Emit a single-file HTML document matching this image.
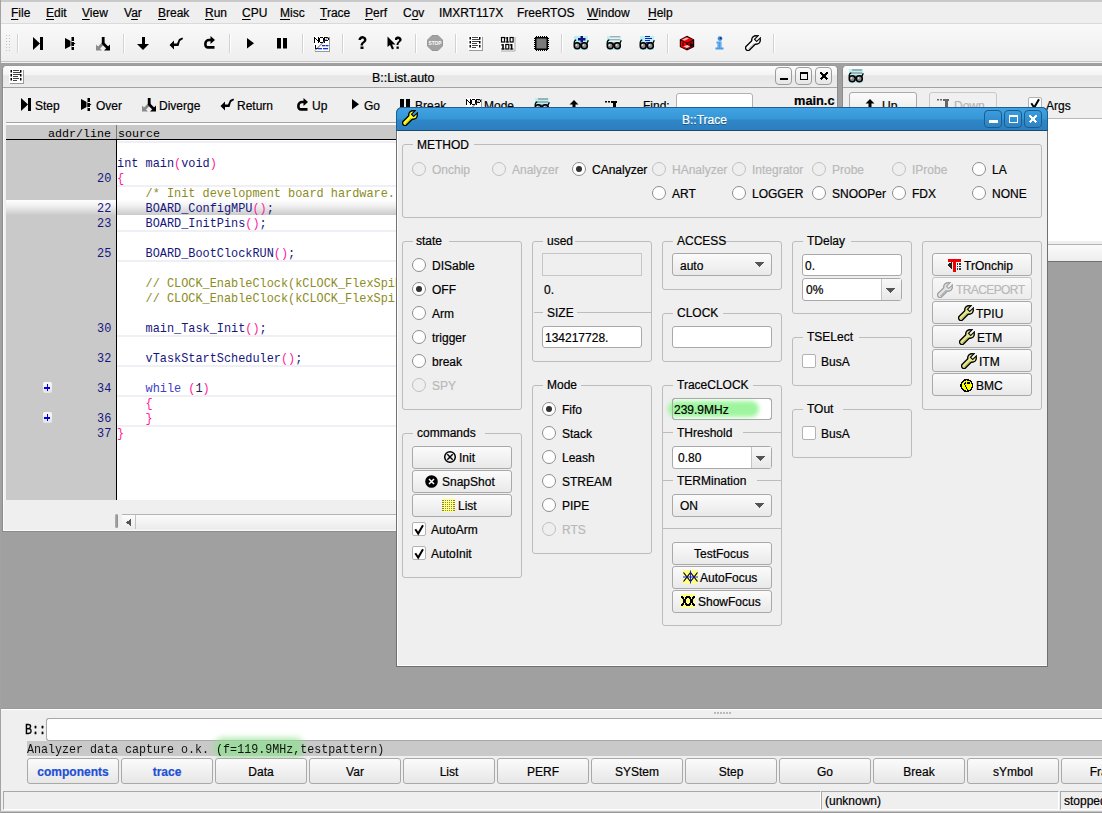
<!DOCTYPE html><html><head><meta charset="utf-8"><style>
html,body{margin:0;padding:0;}
body{width:1102px;height:813px;position:relative;overflow:hidden;background:#efefef;font-family:"Liberation Sans",sans-serif;font-size:12px;}
.a{position:absolute;}
.t{position:absolute;white-space:pre;line-height:14px;font-size:12px;color:#000;}
.s{font-family:"Liberation Sans",sans-serif;-webkit-text-stroke:0.2px currentColor;}
.m{font-family:"Liberation Mono",monospace;font-size:11.68px;}
.grp{position:absolute;border:1px solid #bcbcbc;border-radius:3px;box-sizing:border-box;}
.rad{position:absolute;width:14px;height:14px;border-radius:50%;box-sizing:border-box;border:1px solid #8e8e8e;background:#fff;}
.rad.dis{border-color:#c0c0c0;background:#efefef;}
.rad.on::after{content:"";position:absolute;left:3px;top:3px;width:6px;height:6px;border-radius:50%;background:#303030;}
.chk{position:absolute;width:14px;height:14px;box-sizing:border-box;border:1px solid #b2b2b2;border-radius:2px;background:#fff;}
.btn{position:absolute;box-sizing:border-box;border:1px solid #a9a9a9;border-radius:3px;background:linear-gradient(#fbfbfb,#e9e9e9);}
.inp{position:absolute;box-sizing:border-box;border:1px solid #a9a9a9;border-radius:3px;background:#fff;}
.sep{position:absolute;width:1px;background:#cfcfcf;}
</style></head><body>
<div class="a" style="left:0px;top:0px;width:1102px;height:2px;background:#c9c9c9"></div>
<div class="a" style="left:0px;top:0px;width:1px;height:813px;background:#a3a3a3"></div>
<div class="a" style="left:1px;top:23px;width:1101px;height:1px;background:#dadada"></div>
<div class="t s" style="left:11px;top:6px;text-decoration-thickness:1px;text-underline-offset:2px;"><u>F</u>ile</div>
<div class="t s" style="left:46px;top:6px;text-decoration-thickness:1px;text-underline-offset:2px;"><u>E</u>dit</div>
<div class="t s" style="left:82px;top:6px;text-decoration-thickness:1px;text-underline-offset:2px;"><u>V</u>iew</div>
<div class="t s" style="left:124px;top:6px;text-decoration-thickness:1px;text-underline-offset:2px;">V<u>a</u>r</div>
<div class="t s" style="left:158px;top:6px;text-decoration-thickness:1px;text-underline-offset:2px;"><u>B</u>reak</div>
<div class="t s" style="left:205px;top:6px;text-decoration-thickness:1px;text-underline-offset:2px;"><u>R</u>un</div>
<div class="t s" style="left:242px;top:6px;text-decoration-thickness:1px;text-underline-offset:2px;"><u>C</u>PU</div>
<div class="t s" style="left:280px;top:6px;text-decoration-thickness:1px;text-underline-offset:2px;"><u>M</u>isc</div>
<div class="t s" style="left:320px;top:6px;text-decoration-thickness:1px;text-underline-offset:2px;"><u>T</u>race</div>
<div class="t s" style="left:365px;top:6px;text-decoration-thickness:1px;text-underline-offset:2px;"><u>P</u>erf</div>
<div class="t s" style="left:403px;top:6px;text-decoration-thickness:1px;text-underline-offset:2px;">C<u>o</u>v</div>
<div class="t s" style="left:439px;top:6px;text-decoration-thickness:1px;text-underline-offset:2px;">IMXRT117X</div>
<div class="t s" style="left:517px;top:6px;text-decoration-thickness:1px;text-underline-offset:2px;">FreeRTOS</div>
<div class="t s" style="left:587px;top:6px;text-decoration-thickness:1px;text-underline-offset:2px;"><u>W</u>indow</div>
<div class="t s" style="left:648px;top:6px;text-decoration-thickness:1px;text-underline-offset:2px;"><u>H</u>elp</div>
<div class="a" style="left:1px;top:24px;width:1101px;height:37px;background:linear-gradient(#f9f9f9,#eeeeee)"></div>
<div class="a" style="left:1px;top:61px;width:1101px;height:1px;background:#c4c4c4"></div>
<div class="a" style="left:1px;top:62px;width:1101px;height:1px;background:#f2f2f2"></div>
<div class="a" style="left:6px;top:35px;width:1px;height:1px;background:#c0c0c0"></div>
<div class="a" style="left:9px;top:35px;width:1px;height:1px;background:#c0c0c0"></div>
<div class="a" style="left:6px;top:38px;width:1px;height:1px;background:#c0c0c0"></div>
<div class="a" style="left:9px;top:38px;width:1px;height:1px;background:#c0c0c0"></div>
<div class="a" style="left:6px;top:41px;width:1px;height:1px;background:#c0c0c0"></div>
<div class="a" style="left:9px;top:41px;width:1px;height:1px;background:#c0c0c0"></div>
<div class="a" style="left:6px;top:44px;width:1px;height:1px;background:#c0c0c0"></div>
<div class="a" style="left:9px;top:44px;width:1px;height:1px;background:#c0c0c0"></div>
<div class="a" style="left:6px;top:47px;width:1px;height:1px;background:#c0c0c0"></div>
<div class="a" style="left:9px;top:47px;width:1px;height:1px;background:#c0c0c0"></div>
<div class="a" style="left:6px;top:50px;width:1px;height:1px;background:#c0c0c0"></div>
<div class="a" style="left:9px;top:50px;width:1px;height:1px;background:#c0c0c0"></div>
<div class="a" style="left:17px;top:34px;width:1px;height:19px;background:#d2d2d2"></div>
<div class="a" style="left:18px;top:34px;width:1px;height:19px;background:#ffffff"></div>
<div class="a" style="left:123px;top:34px;width:1px;height:19px;background:#d2d2d2"></div>
<div class="a" style="left:124px;top:34px;width:1px;height:19px;background:#ffffff"></div>
<div class="a" style="left:229px;top:34px;width:1px;height:19px;background:#d2d2d2"></div>
<div class="a" style="left:230px;top:34px;width:1px;height:19px;background:#ffffff"></div>
<div class="a" style="left:302px;top:34px;width:1px;height:19px;background:#d2d2d2"></div>
<div class="a" style="left:303px;top:34px;width:1px;height:19px;background:#ffffff"></div>
<div class="a" style="left:342px;top:34px;width:1px;height:19px;background:#d2d2d2"></div>
<div class="a" style="left:343px;top:34px;width:1px;height:19px;background:#ffffff"></div>
<div class="a" style="left:415px;top:34px;width:1px;height:19px;background:#d2d2d2"></div>
<div class="a" style="left:416px;top:34px;width:1px;height:19px;background:#ffffff"></div>
<div class="a" style="left:455px;top:34px;width:1px;height:19px;background:#d2d2d2"></div>
<div class="a" style="left:456px;top:34px;width:1px;height:19px;background:#ffffff"></div>
<div class="a" style="left:561px;top:34px;width:1px;height:19px;background:#d2d2d2"></div>
<div class="a" style="left:562px;top:34px;width:1px;height:19px;background:#ffffff"></div>
<div class="a" style="left:667px;top:34px;width:1px;height:19px;background:#d2d2d2"></div>
<div class="a" style="left:668px;top:34px;width:1px;height:19px;background:#ffffff"></div>
<div class="a" style="left:773px;top:34px;width:1px;height:19px;background:#d2d2d2"></div>
<div class="a" style="left:774px;top:34px;width:1px;height:19px;background:#ffffff"></div>
<svg class="a" style="left:33px;top:37px;overflow:visible" width="16" height="16" viewBox="0 0 16 16"><path d="M0 0 L7 6.5 L0 13 Z" fill="#000"/><rect x="7" y="0" width="3" height="13" fill="#000"/></svg>
<svg class="a" style="left:65px;top:37px;overflow:visible" width="16" height="16" viewBox="0 0 16 16"><path d="M0 1 L10.5 6.5 L0 12 Z" fill="#000"/><rect x="5.5" y="0" width="1" height="13" fill="#f4f4f4"/><rect x="6.5" y="0" width="2.5" height="13" fill="#000"/><rect x="6.5" y="4" width="2.5" height="1" fill="#f4f4f4"/><rect x="6.5" y="9" width="2.5" height="1" fill="#f4f4f4"/></svg>
<svg class="a" style="left:95px;top:37px;overflow:visible" width="16" height="16" viewBox="0 0 16 16"><path d="M8 6.5 L3 11.5" stroke="#8a8a8a" stroke-width="2.8"/><path d="M1 13.5 V7.5 L7 13.5 Z" fill="#8a8a8a"/><rect x="6.8" y="0" width="2.8" height="7" fill="#000"/><path d="M8.2 6.5 L13 11.3" stroke="#000" stroke-width="2.8"/><path d="M15 13.5 V7.5 L9 13.5 Z" fill="#000"/></svg>
<svg class="a" style="left:137px;top:37px;overflow:visible" width="16" height="16" viewBox="0 0 16 16"><rect x="5" y="0" width="3" height="7" fill="#000"/><path d="M0 7 H12 L6 13 Z" fill="#000"/></svg>
<svg class="a" style="left:169px;top:37px;overflow:visible" width="16" height="16" viewBox="0 0 16 16"><path d="M0.5 8 L5 3.5 L5 6.5 L8 6.5 L10 2 L13.5 0.5 L14 2 L11 4 L9.5 9 L5 9 L5 12.5 Z" fill="#000"/></svg>
<svg class="a" style="left:203px;top:36px;overflow:visible" width="16" height="16" viewBox="0 0 16 16"><path d="M8.5 4 H6 A3.6 3.6 0 0 0 2.4 7.6 V8.6 A2.6 2.6 0 0 0 5 11.4 H11.5" stroke="#000" stroke-width="2.6" fill="none"/><path d="M7.5 0 L12 4 L7.5 8 Z" fill="#000"/></svg>
<svg class="a" style="left:247px;top:38px;overflow:visible" width="16" height="16" viewBox="0 0 16 16"><path d="M0 0 L7 5.25 L0 10.5 Z" fill="#000"/></svg>
<svg class="a" style="left:277px;top:38px;overflow:visible" width="16" height="16" viewBox="0 0 16 16"><rect x="0" y="0" width="4" height="10.5" fill="#000"/><rect x="6" y="0" width="4" height="10.5" fill="#000"/></svg>
<svg class="a" style="left:314px;top:36px;overflow:visible" width="16" height="16" viewBox="0 0 16 16"><rect x="0" y="0" width="15" height="15" fill="#fff"/><rect x="15" y="1" width="1" height="15" fill="#999"/><rect x="1" y="15" width="15" height="1" fill="#999"/><rect x="0" y="1" width="1" height="1" fill="#000"/><rect x="4" y="1" width="1" height="1" fill="#000"/><rect x="0" y="2" width="2" height="1" fill="#000"/><rect x="4" y="2" width="1" height="1" fill="#000"/><rect x="0" y="3" width="1" height="1" fill="#000"/><rect x="2" y="3" width="1" height="1" fill="#000"/><rect x="4" y="3" width="1" height="1" fill="#000"/><rect x="0" y="4" width="1" height="1" fill="#000"/><rect x="3" y="4" width="2" height="1" fill="#000"/><rect x="0" y="5" width="1" height="1" fill="#000"/><rect x="4" y="5" width="1" height="1" fill="#000"/><rect x="0" y="6" width="1" height="1" fill="#000"/><rect x="4" y="6" width="1" height="1" fill="#000"/><rect x="6" y="1" width="3" height="1" fill="#000"/><rect x="5" y="2" width="1" height="1" fill="#000"/><rect x="9" y="2" width="1" height="1" fill="#000"/><rect x="5" y="3" width="1" height="1" fill="#000"/><rect x="9" y="3" width="1" height="1" fill="#000"/><rect x="5" y="4" width="1" height="1" fill="#000"/><rect x="9" y="4" width="1" height="1" fill="#000"/><rect x="5" y="5" width="1" height="1" fill="#000"/><rect x="9" y="5" width="1" height="1" fill="#000"/><rect x="6" y="6" width="3" height="1" fill="#000"/><rect x="10" y="1" width="4" height="1" fill="#000"/><rect x="10" y="2" width="1" height="1" fill="#000"/><rect x="14" y="2" width="1" height="1" fill="#000"/><rect x="10" y="3" width="1" height="1" fill="#000"/><rect x="14" y="3" width="1" height="1" fill="#000"/><rect x="10" y="4" width="4" height="1" fill="#000"/><rect x="10" y="5" width="1" height="1" fill="#000"/><rect x="10" y="6" width="1" height="1" fill="#000"/><rect x="0" y="0" width="0" height="0"/><rect x="1" y="9" width="1" height="1" fill="#000"/><rect x="1" y="10" width="1" height="1" fill="#000"/><rect x="1" y="11" width="1" height="1" fill="#000"/><rect x="1" y="12" width="3" height="1" fill="#000"/><path d="M1 14.5 L14.5 1" stroke="#444" stroke-width="0.9"/><rect x="8" y="9" width="3" height="1.3" fill="#1030e0"/><rect x="11.5" y="9" width="3" height="1.3" fill="#1030e0"/><rect x="4" y="12" width="4" height="1.3" fill="#1030e0"/><rect x="9" y="12" width="5" height="1.3" fill="#1030e0"/></svg>
<svg class="a" style="left:357px;top:36px;overflow:visible" width="16" height="16" viewBox="0 0 16 16"><path d="M1.5 4 A4 3.6 0 1 1 8 6.5 C6.5 7.5 6 8 6 9.5 L3.5 9.5 C3.5 7.5 4.5 6.5 6 5.5 A1.5 1.5 0 1 0 4 4 Z" fill="#000"/><rect x="3.5" y="10.5" width="3" height="2.5" fill="#000"/></svg>
<svg class="a" style="left:387px;top:36px;overflow:visible" width="16" height="16" viewBox="0 0 16 16"><path d="M0.5 0.5 L0.5 11 L3 9 L5 13.5 L7 12.5 L5 8.5 L8.5 8.5 Z" fill="#000"/><path d="M8 4 A3.3 3 0 1 1 13 6 C12 7 11.5 7.5 11.5 9 L9.5 9 C9.5 7 10.5 6.2 11.5 5.2 A1.1 1.1 0 1 0 10 4 Z" fill="#000"/><rect x="9.5" y="10.5" width="2.3" height="2.3" fill="#000"/></svg>
<svg class="a" style="left:427px;top:35px;overflow:visible" width="16" height="16" viewBox="0 0 16 16"><path d="M5 0.5 H11 L15.5 5 V11 L11 15.5 H5 L0.5 11 V5 Z" fill="#a2a2a2" stroke="#8a8a8a" stroke-width="0.8"/><text x="1.6" y="10.3" font-family="Liberation Sans" font-weight="bold" font-size="5.6" fill="#fff" textLength="12.8" lengthAdjust="spacingAndGlyphs">STOP</text></svg>
<svg class="a" style="left:468px;top:36px;overflow:visible" width="16" height="16" viewBox="0 0 16 16"><rect x="0" y="0" width="14" height="14" fill="#fff"/><rect x="14" y="1" width="1" height="14" fill="#9a9a9a"/><rect x="1" y="14" width="14" height="1" fill="#9a9a9a"/><rect x="1.5" y="1" width="1.5" height="2.5" fill="#000"/><rect x="11" y="1" width="1.5" height="2.5" fill="#000"/><rect x="1.5" y="5" width="1.5" height="2.5" fill="#000"/><rect x="11" y="5" width="1.5" height="2.5" fill="#000"/><rect x="1.5" y="9" width="1.5" height="2.5" fill="#000"/><rect x="11" y="9" width="1.5" height="2.5" fill="#000"/><rect x="4" y="1" width="6" height="1" fill="#444"/><rect x="4" y="3" width="8" height="1" fill="#444"/><rect x="4" y="5" width="7" height="1" fill="#444"/><rect x="4" y="7" width="5" height="1" fill="#444"/><rect x="4" y="9" width="6" height="1" fill="#444"/><rect x="4" y="11" width="4" height="1" fill="#444"/></svg>
<svg class="a" style="left:500px;top:36px;overflow:visible" width="16" height="16" viewBox="0 0 16 16"><rect x="0.5" y="0.5" width="14" height="14" fill="#fff"/><path d="M15 1 V15 H1" stroke="#aaa" fill="none"/><rect x="1.5" y="1.5" width="3" height="4.5" fill="none" stroke="#000" stroke-width="1.2"/><rect x="6.5" y="1" width="1.6" height="5.5" fill="#000"/><rect x="5.5" y="5.5" width="3.6" height="1" fill="#000"/><rect x="5.5" y="1.3" width="1.2" height="1.2" fill="#000"/><rect x="10.1" y="1.5" width="3" height="4.5" fill="none" stroke="#000" stroke-width="1.2"/><rect x="2.2" y="8" width="1.6" height="5.5" fill="#000"/><rect x="1.2" y="12.5" width="3.6" height="1" fill="#000"/><rect x="1.2" y="8.3" width="1.2" height="1.2" fill="#000"/><rect x="5.8" y="8.5" width="3" height="4.5" fill="none" stroke="#000" stroke-width="1.2"/><rect x="10.799999999999999" y="8" width="1.6" height="5.5" fill="#000"/><rect x="9.799999999999999" y="12.5" width="3.6" height="1" fill="#000"/><rect x="9.799999999999999" y="8.3" width="1.2" height="1.2" fill="#000"/></svg>
<svg class="a" style="left:534px;top:36px;overflow:visible" width="16" height="16" viewBox="0 0 16 16"><rect x="1" y="1" width="13" height="13" fill="#000"/><rect x="2.5" y="2.5" width="10" height="10" fill="#7a7a7a"/><path d="M0.5 2 V13 M14.5 2 V13 M2 0.5 H13 M2 14.5 H13" stroke="#000" stroke-dasharray="1 1"/></svg>
<svg class="a" style="left:573px;top:35px;overflow:visible" width="16" height="16" viewBox="0 0 16 16"><rect x="1" y="1" width="14" height="14" fill="#b8f0f4"/><rect x="7.5" y="1" width="2.5" height="6.5" fill="#101080"/><rect x="5" y="3" width="7.5" height="2.5" fill="#101080"/><path d="M1.3 9.5 C0.8 6.5 1.8 5.2 3.2 5" stroke="#000" stroke-width="1.3" fill="none"/><path d="M13.8 8.5 L15.3 5.2" stroke="#000" stroke-width="1.3" fill="none"/><circle cx="4.2" cy="10.8" r="3" fill="#8c8c8c" stroke="#000" stroke-width="1.5"/><circle cx="11.3" cy="10.8" r="3" fill="#8c8c8c" stroke="#000" stroke-width="1.5"/><path d="M6.8 9.6 Q7.75 8.6 8.7 9.6" stroke="#000" stroke-width="1.3" fill="none"/><circle cx="3.4" cy="10" r="0.9" fill="#e0e0e0"/><circle cx="10.5" cy="10" r="0.9" fill="#e0e0e0"/></svg>
<svg class="a" style="left:606px;top:35px;overflow:visible" width="16" height="16" viewBox="0 0 16 16"><rect x="1" y="1" width="14" height="14" fill="#b8f0f4"/><rect x="4" y="1.5" width="10" height="1" fill="#777"/><rect x="4" y="2.5" width="10" height="1" fill="#fff"/><rect x="3" y="4.5" width="11" height="1" fill="#777"/><rect x="3" y="5.5" width="11" height="1" fill="#fff"/><rect x="4" y="7.5" width="10" height="1" fill="#777"/><path d="M1.3 9.5 C0.8 6.5 1.8 5.2 3.2 5" stroke="#000" stroke-width="1.3" fill="none"/><path d="M13.8 8.5 L15.3 5.2" stroke="#000" stroke-width="1.3" fill="none"/><circle cx="4.2" cy="10.8" r="3" fill="#8c8c8c" stroke="#000" stroke-width="1.5"/><circle cx="11.3" cy="10.8" r="3" fill="#8c8c8c" stroke="#000" stroke-width="1.5"/><path d="M6.8 9.6 Q7.75 8.6 8.7 9.6" stroke="#000" stroke-width="1.3" fill="none"/><circle cx="3.4" cy="10" r="0.9" fill="#e0e0e0"/><circle cx="10.5" cy="10" r="0.9" fill="#e0e0e0"/></svg>
<svg class="a" style="left:639px;top:35px;overflow:visible" width="16" height="16" viewBox="0 0 16 16"><rect x="1" y="1" width="14" height="14" fill="#b8f0f4"/><rect x="6" y="1" width="5" height="1" fill="#1020c0"/><rect x="6" y="3" width="7" height="1" fill="#1020c0"/><rect x="6" y="5" width="5" height="1" fill="#1020c0"/><rect x="7" y="7" width="6" height="1" fill="#1020c0"/><path d="M1.3 9.5 C0.8 6.5 1.8 5.2 3.2 5" stroke="#000" stroke-width="1.3" fill="none"/><path d="M13.8 8.5 L15.3 5.2" stroke="#000" stroke-width="1.3" fill="none"/><circle cx="4.2" cy="10.8" r="3" fill="#8c8c8c" stroke="#000" stroke-width="1.5"/><circle cx="11.3" cy="10.8" r="3" fill="#8c8c8c" stroke="#000" stroke-width="1.5"/><path d="M6.8 9.6 Q7.75 8.6 8.7 9.6" stroke="#000" stroke-width="1.3" fill="none"/><circle cx="3.4" cy="10" r="0.9" fill="#e0e0e0"/><circle cx="10.5" cy="10" r="0.9" fill="#e0e0e0"/></svg>
<svg class="a" style="left:679px;top:35px;overflow:visible" width="16" height="16" viewBox="0 0 16 16"><path d="M8 0.8 L15.2 4.5 L15.2 12 L8 15.6 L0.8 12 L0.8 4.5 Z" fill="#000"/><path d="M8 1.8 L14.2 4.8 L8 7.8 L1.8 4.8 Z" fill="#f00000"/><path d="M3 4.6 L7.5 2.4 L10 3.6 L5.5 5.8 Z" fill="#ffb0b0"/><path d="M1.8 5.6 L7.5 8.5 L7.5 14.6 L1.8 11.6 Z" fill="#ff0000"/><path d="M8.5 8.5 L14.2 5.6 L14.2 11.6 L8.5 14.6 Z" fill="#a00000"/><path d="M4 7.5 V11 M11.5 8 V11.5 L14 10" stroke="#000" stroke-width="1"/><path d="M4.5 11.5 L8 10 L11 11.5 L8 13 Z" fill="#ffc4c4"/></svg>
<svg class="a" style="left:715px;top:36px;overflow:visible" width="16" height="16" viewBox="0 0 16 16"><circle cx="5" cy="2.6" r="2.4" fill="#3d8fdc"/><circle cx="5.6" cy="2.2" r="1" fill="#103080"/><path d="M1.5 5.5 H6.5 V11.5 H8.5 V13.5 H0.5 V11.5 H2.5 V7.5 H1.5 Z" fill="#4a9ae6"/><path d="M3 7 H6 M3 9 H6 M3 11 H6" stroke="#9ccaf4" stroke-width="0.8" stroke-dasharray="1 1"/></svg>
<svg class="a" style="left:745px;top:35px" width="16" height="16" viewBox="0 0 16 16"><line x1="3" y1="13" x2="9" y2="7" stroke="#000" stroke-width="6.2" stroke-linecap="round"/><circle cx="11" cy="5" r="5" fill="#000"/><line x1="3" y1="13" x2="9" y2="7" stroke="#ffffff" stroke-width="3.6" stroke-linecap="round"/><circle cx="11" cy="5" r="3.6" fill="#ffffff"/><line x1="10.2" y1="5.8" x2="14.8" y2="1.2" stroke="#000" stroke-width="4.2"/><line x1="11" y1="5" x2="16" y2="0" stroke="#f2f2f2" stroke-width="2"/><line x1="3.5" y1="14" x2="9.5" y2="8" stroke="rgba(0,0,0,0.35)" stroke-width="1"/></svg>
<div class="a" style="left:1px;top:63px;width:1101px;height:646px;background:#a0a0a0"></div>
<div class="a" style="left:2px;top:65px;width:836px;height:467px;background:#efefef;border:1px solid #8c8c8c;border-top-color:#9a9a9a;border-radius:5px 5px 0 0;box-sizing:border-box"></div>
<div class="a" style="left:3px;top:66px;width:834px;height:21px;background:linear-gradient(#fdfdfd 0%,#f3f3f3 44%,#e6e6e6 46%,#ececec 100%);border-radius:4px 4px 0 0"></div>
<div class="a" style="left:3px;top:87px;width:834px;height:1px;background:#a3a3a3"></div>
<div class="t s" style="left:372px;top:71px;font-size:12.5px;">B::List.auto</div>
<div class="a" style="left:775px;top:67px;width:17px;height:18px;box-sizing:border-box;border:1px solid #9c9c9c;border-radius:4px;background:linear-gradient(#fbfbfb,#e6e6e6)"></div>
<div class="a" style="left:795px;top:67px;width:17px;height:18px;box-sizing:border-box;border:1px solid #9c9c9c;border-radius:4px;background:linear-gradient(#fbfbfb,#e6e6e6)"></div>
<div class="a" style="left:815px;top:67px;width:17px;height:18px;box-sizing:border-box;border:1px solid #9c9c9c;border-radius:4px;background:linear-gradient(#fbfbfb,#e6e6e6)"></div>
<div class="a" style="left:780px;top:78px;width:8px;height:2px;background:#000"></div>
<div class="a" style="left:800px;top:72px;width:8px;height:8px;border:1px solid #000;border-top-width:2px;box-sizing:border-box"></div>
<svg class="a" style="left:819px;top:71px" width="10" height="10" viewBox="0 0 10 10" shape-rendering="crispEdges"><path d="M1.5 1.5 L8.5 8.5 M8.5 1.5 L1.5 8.5" stroke="#000" stroke-width="2.2" fill="none"/></svg>
<div class="t s" style="left:35px;top:99px;">Step</div>
<div class="t s" style="left:96px;top:99px;">Over</div>
<div class="t s" style="left:159px;top:99px;">Diverge</div>
<div class="t s" style="left:237px;top:99px;">Return</div>
<div class="t s" style="left:312px;top:99px;">Up</div>
<div class="t s" style="left:364px;top:99px;">Go</div>
<div class="t s" style="left:415px;top:99px;">Break</div>
<div class="t s" style="left:484px;top:99px;">Mode</div>
<div class="t s" style="left:643px;top:99px;">Find:</div>
<div class="a" style="left:676px;top:93px;width:77px;height:20px;background:#fff;border:1px solid #b0b0b0;border-radius:3px;box-sizing:border-box"></div>
<div class="t s" style="left:794px;top:94px;font-weight:bold;font-size:12.8px;">main.c</div>
<svg class="a" style="left:21px;top:98px;overflow:visible" width="16" height="16" viewBox="0 0 16 16"><path d="M0 0 L7 6.5 L0 13 Z" fill="#000"/><rect x="7" y="0" width="3" height="13" fill="#000"/></svg>
<svg class="a" style="left:81px;top:98px;overflow:visible" width="16" height="16" viewBox="0 0 16 16"><path d="M0 1 L10.5 6.5 L0 12 Z" fill="#000"/><rect x="5.5" y="0" width="1" height="13" fill="#f4f4f4"/><rect x="6.5" y="0" width="2.5" height="13" fill="#000"/><rect x="6.5" y="4" width="2.5" height="1" fill="#f4f4f4"/><rect x="6.5" y="9" width="2.5" height="1" fill="#f4f4f4"/></svg>
<svg class="a" style="left:141px;top:98px;overflow:visible" width="16" height="16" viewBox="0 0 16 16"><path d="M8 6.5 L3 11.5" stroke="#8a8a8a" stroke-width="2.8"/><path d="M1 13.5 V7.5 L7 13.5 Z" fill="#8a8a8a"/><rect x="6.8" y="0" width="2.8" height="7" fill="#000"/><path d="M8.2 6.5 L13 11.3" stroke="#000" stroke-width="2.8"/><path d="M15 13.5 V7.5 L9 13.5 Z" fill="#000"/></svg>
<svg class="a" style="left:220px;top:98px;overflow:visible" width="16" height="16" viewBox="0 0 16 16"><path d="M0.5 8 L5 3.5 L5 6.5 L8 6.5 L10 2 L13.5 0.5 L14 2 L11 4 L9.5 9 L5 9 L5 12.5 Z" fill="#000"/></svg>
<svg class="a" style="left:296px;top:98px;overflow:visible" width="16" height="16" viewBox="0 0 16 16"><path d="M8.5 4 H6 A3.6 3.6 0 0 0 2.4 7.6 V8.6 A2.6 2.6 0 0 0 5 11.4 H11.5" stroke="#000" stroke-width="2.6" fill="none"/><path d="M7.5 0 L12 4 L7.5 8 Z" fill="#000"/></svg>
<svg class="a" style="left:352px;top:99px;overflow:visible" width="16" height="16" viewBox="0 0 16 16"><path d="M0 0 L7 5.25 L0 10.5 Z" fill="#000"/></svg>
<svg class="a" style="left:400px;top:99px;overflow:visible" width="16" height="16" viewBox="0 0 16 16"><rect x="0" y="0" width="4" height="10.5" fill="#000"/><rect x="6" y="0" width="4" height="10.5" fill="#000"/></svg>
<svg class="a" style="left:9px;top:69px;overflow:visible" width="16" height="16" viewBox="0 0 16 16"><rect x="0" y="0" width="14" height="14" fill="#fff"/><rect x="14" y="1" width="1" height="14" fill="#9a9a9a"/><rect x="1" y="14" width="14" height="1" fill="#9a9a9a"/><rect x="1.5" y="1" width="1.5" height="2.5" fill="#000"/><rect x="11" y="1" width="1.5" height="2.5" fill="#000"/><rect x="1.5" y="5" width="1.5" height="2.5" fill="#000"/><rect x="11" y="5" width="1.5" height="2.5" fill="#000"/><rect x="1.5" y="9" width="1.5" height="2.5" fill="#000"/><rect x="11" y="9" width="1.5" height="2.5" fill="#000"/><rect x="4" y="1" width="6" height="1" fill="#444"/><rect x="4" y="3" width="8" height="1" fill="#444"/><rect x="4" y="5" width="7" height="1" fill="#444"/><rect x="4" y="7" width="5" height="1" fill="#444"/><rect x="4" y="9" width="6" height="1" fill="#444"/><rect x="4" y="11" width="4" height="1" fill="#444"/></svg>
<svg class="a" style="left:466px;top:98px;overflow:visible" width="16" height="16" viewBox="0 0 16 16"><rect x="0" y="0" width="15" height="15" fill="#fff"/><rect x="15" y="1" width="1" height="15" fill="#999"/><rect x="1" y="15" width="15" height="1" fill="#999"/><rect x="0" y="1" width="1" height="1" fill="#000"/><rect x="4" y="1" width="1" height="1" fill="#000"/><rect x="0" y="2" width="2" height="1" fill="#000"/><rect x="4" y="2" width="1" height="1" fill="#000"/><rect x="0" y="3" width="1" height="1" fill="#000"/><rect x="2" y="3" width="1" height="1" fill="#000"/><rect x="4" y="3" width="1" height="1" fill="#000"/><rect x="0" y="4" width="1" height="1" fill="#000"/><rect x="3" y="4" width="2" height="1" fill="#000"/><rect x="0" y="5" width="1" height="1" fill="#000"/><rect x="4" y="5" width="1" height="1" fill="#000"/><rect x="0" y="6" width="1" height="1" fill="#000"/><rect x="4" y="6" width="1" height="1" fill="#000"/><rect x="6" y="1" width="3" height="1" fill="#000"/><rect x="5" y="2" width="1" height="1" fill="#000"/><rect x="9" y="2" width="1" height="1" fill="#000"/><rect x="5" y="3" width="1" height="1" fill="#000"/><rect x="9" y="3" width="1" height="1" fill="#000"/><rect x="5" y="4" width="1" height="1" fill="#000"/><rect x="9" y="4" width="1" height="1" fill="#000"/><rect x="5" y="5" width="1" height="1" fill="#000"/><rect x="9" y="5" width="1" height="1" fill="#000"/><rect x="6" y="6" width="3" height="1" fill="#000"/><rect x="10" y="1" width="4" height="1" fill="#000"/><rect x="10" y="2" width="1" height="1" fill="#000"/><rect x="14" y="2" width="1" height="1" fill="#000"/><rect x="10" y="3" width="1" height="1" fill="#000"/><rect x="14" y="3" width="1" height="1" fill="#000"/><rect x="10" y="4" width="4" height="1" fill="#000"/><rect x="10" y="5" width="1" height="1" fill="#000"/><rect x="10" y="6" width="1" height="1" fill="#000"/><rect x="0" y="0" width="0" height="0"/><rect x="1" y="9" width="1" height="1" fill="#000"/><rect x="1" y="10" width="1" height="1" fill="#000"/><rect x="1" y="11" width="1" height="1" fill="#000"/><rect x="1" y="12" width="3" height="1" fill="#000"/><path d="M1 14.5 L14.5 1" stroke="#444" stroke-width="0.9"/><rect x="8" y="9" width="3" height="1.3" fill="#1030e0"/><rect x="11.5" y="9" width="3" height="1.3" fill="#1030e0"/><rect x="4" y="12" width="4" height="1.3" fill="#1030e0"/><rect x="9" y="12" width="5" height="1.3" fill="#1030e0"/></svg>
<svg class="a" style="left:534px;top:97px;overflow:visible" width="16" height="16" viewBox="0 0 16 16"><rect x="1" y="1" width="14" height="14" fill="#b8f0f4"/><rect x="4" y="1.5" width="10" height="1" fill="#777"/><rect x="3" y="4.5" width="11" height="1" fill="#777"/><rect x="4" y="7.5" width="10" height="1" fill="#777"/><path d="M1.3 9.5 C0.8 6.5 1.8 5.2 3.2 5" stroke="#000" stroke-width="1.3" fill="none"/><path d="M13.8 8.5 L15.3 5.2" stroke="#000" stroke-width="1.3" fill="none"/><circle cx="4.2" cy="10.8" r="3" fill="#8c8c8c" stroke="#000" stroke-width="1.5"/><circle cx="11.3" cy="10.8" r="3" fill="#8c8c8c" stroke="#000" stroke-width="1.5"/><path d="M6.8 9.6 Q7.75 8.6 8.7 9.6" stroke="#000" stroke-width="1.3" fill="none"/><circle cx="3.4" cy="10" r="0.9" fill="#e0e0e0"/><circle cx="10.5" cy="10" r="0.9" fill="#e0e0e0"/></svg>
<svg class="a" style="left:570px;top:100px;overflow:visible" width="16" height="16" viewBox="0 0 16 16"><path d="M4 0 L8.5 4.5 H5.5 V12 H2.5 V4.5 H-0.5 Z" fill="#000"/></svg>
<svg class="a" style="left:605px;top:101px;overflow:visible" width="16" height="16" viewBox="0 0 16 16"><rect x="0" y="0" width="2" height="1.5" fill="#000"/><rect x="3" y="0" width="2" height="1.5" fill="#000"/><rect x="6" y="0" width="6" height="2" fill="#000"/><rect x="8" y="0" width="3" height="10" fill="#000"/></svg>
<div class="a" style="left:6px;top:122px;width:831px;height:1px;background:#a4a4a4"></div>
<div class="a" style="left:6px;top:123px;width:831px;height:2px;background:#fdfdfd"></div>
<div class="a" style="left:3px;top:88px;width:1px;height:442px;background:#fcfcfc"></div>
<div class="a" style="left:6px;top:125px;width:831px;height:14px;background:#c9c9c9"></div>
<div class="a" style="left:6px;top:139px;width:831px;height:1px;background:#000"></div>
<div class="a" style="left:116px;top:125px;width:1px;height:14px;background:#7a7a7a"></div>
<div class="t m" style="left:48px;top:127px;">addr/line</div>
<div class="t m" style="left:118px;top:127px;">source</div>
<div class="a" style="left:6px;top:140px;width:110px;height:360px;background:#c9c9c9"></div>
<div class="a" style="left:116px;top:140px;width:1px;height:360px;background:#000"></div>
<div class="a" style="left:117px;top:140px;width:720px;height:360px;background:#fff"></div>
<div class="a" style="left:117px;top:141px;width:720px;height:2px;background:#eef0f6"></div>
<div class="a" style="left:117px;top:185px;width:720px;height:2px;background:#eef0f6"></div>
<div class="a" style="left:117px;top:230px;width:720px;height:2px;background:#eef0f6"></div>
<div class="a" style="left:117px;top:260px;width:720px;height:2px;background:#eef0f6"></div>
<div class="a" style="left:117px;top:335px;width:720px;height:2px;background:#eef0f6"></div>
<div class="a" style="left:117px;top:365px;width:720px;height:2px;background:#eef0f6"></div>
<div class="a" style="left:117px;top:395px;width:720px;height:2px;background:#eef0f6"></div>
<div class="a" style="left:117px;top:425px;width:720px;height:2px;background:#eef0f6"></div>
<div class="a" style="left:6px;top:200px;width:831px;height:15px;background:linear-gradient(#ffffff 0%,#f0f0f0 40%,#cacaca 100%)"></div>
<div class="a" style="left:116px;top:200px;width:1px;height:15px;background:#000"></div>
<div class="t m" style="left:117px;top:157px;font-size:11.88px;"><span style="color:#16167e">int main</span><span style="color:#ff1a9c">(</span><span style="color:#16167e">void</span><span style="color:#ff1a9c">)</span></div>
<div class="t m" style="left:97px;top:172px;color:#16167e;font-size:11.88px;">20</div>
<div class="t m" style="left:117px;top:172px;font-size:11.88px;"><span style="color:#ff1a9c">{</span></div>
<div class="t m" style="left:117px;top:187px;font-size:11.88px;"><span style="color:#8c8c1e">    /* Init development board hardware.</span></div>
<div class="t m" style="left:97px;top:202px;color:#16167e;font-size:11.88px;">22</div>
<div class="t m" style="left:117px;top:202px;font-size:11.88px;"><span style="color:#16167e">    BOARD_ConfigMPU</span><span style="color:#ff1a9c">()</span><span style="color:#16167e">;</span></div>
<div class="t m" style="left:97px;top:217px;color:#16167e;font-size:11.88px;">23</div>
<div class="t m" style="left:117px;top:217px;font-size:11.88px;"><span style="color:#16167e">    BOARD_InitPins</span><span style="color:#ff1a9c">()</span><span style="color:#16167e">;</span></div>
<div class="t m" style="left:97px;top:247px;color:#16167e;font-size:11.88px;">25</div>
<div class="t m" style="left:117px;top:247px;font-size:11.88px;"><span style="color:#16167e">    BOARD_BootClockRUN</span><span style="color:#ff1a9c">()</span><span style="color:#16167e">;</span></div>
<div class="t m" style="left:117px;top:277px;font-size:11.88px;"><span style="color:#8c8c1e">    // CLOCK_EnableClock(kCLOCK_FlexSpiE</span></div>
<div class="t m" style="left:117px;top:292px;font-size:11.88px;"><span style="color:#8c8c1e">    // CLOCK_EnableClock(kCLOCK_FlexSpi)</span></div>
<div class="t m" style="left:97px;top:322px;color:#16167e;font-size:11.88px;">30</div>
<div class="t m" style="left:117px;top:322px;font-size:11.88px;"><span style="color:#16167e">    main_Task_Init</span><span style="color:#ff1a9c">()</span><span style="color:#16167e">;</span></div>
<div class="t m" style="left:97px;top:352px;color:#16167e;font-size:11.88px;">32</div>
<div class="t m" style="left:117px;top:352px;font-size:11.88px;"><span style="color:#16167e">    vTaskStartScheduler</span><span style="color:#ff1a9c">()</span><span style="color:#16167e">;</span></div>
<div class="t m" style="left:97px;top:382px;color:#16167e;font-size:11.88px;">34</div>
<div class="t m" style="left:117px;top:382px;font-size:11.88px;"><span style="color:#4040c8">    while </span><span style="color:#ff1a9c">(</span><span style="color:#202050">1</span><span style="color:#ff1a9c">)</span></div>
<div class="t m" style="left:117px;top:397px;font-size:11.88px;"><span style="color:#ff1a9c">    {</span></div>
<div class="t m" style="left:97px;top:412px;color:#16167e;font-size:11.88px;">36</div>
<div class="t m" style="left:117px;top:412px;font-size:11.88px;"><span style="color:#ff1a9c">    }</span></div>
<div class="t m" style="left:97px;top:427px;color:#16167e;font-size:11.88px;">37</div>
<div class="t m" style="left:117px;top:427px;font-size:11.88px;"><span style="color:#ff1a9c">}</span></div>
<div class="a" style="left:43px;top:382px;width:9px;height:11px;background:linear-gradient(#fafafa,#e4e4e4);border-radius:2px"></div>
<div class="a" style="left:44px;top:387px;width:6px;height:1.5px;background:#0000e0"></div>
<div class="a" style="left:46.5px;top:384px;width:1.5px;height:7px;background:#0000e0"></div>
<div class="a" style="left:43px;top:412px;width:9px;height:11px;background:linear-gradient(#fafafa,#e4e4e4);border-radius:2px"></div>
<div class="a" style="left:44px;top:417px;width:6px;height:1.5px;background:#0000e0"></div>
<div class="a" style="left:46.5px;top:414px;width:1.5px;height:7px;background:#0000e0"></div>
<div class="a" style="left:115px;top:514px;width:3px;height:14px;background:linear-gradient(90deg,#b0b0b0,#8c8c8c);border-radius:1.5px"></div>
<div class="a" style="left:122px;top:514px;width:715px;height:1px;background:#b4b4b4"></div>
<div class="a" style="left:122px;top:515px;width:14px;height:14px;background:linear-gradient(#fcfcfc,#ececec)"></div>
<div class="a" style="left:135px;top:515px;width:1px;height:14px;background:#c4c4c4"></div>
<div class="a" style="left:136px;top:515px;width:701px;height:14px;background:linear-gradient(#fafafa,#ececec)"></div>
<svg class="a" style="left:126px;top:519px" width="5" height="7" viewBox="0 0 5 7" shape-rendering="crispEdges"><path d="M4.5 0 L0 3.5 L4.5 7 Z" fill="#555"/></svg>
<div class="a" style="left:3px;top:530px;width:834px;height:1px;background:#fafafa"></div>
<div class="a" style="left:842px;top:65px;width:260px;height:197px;background:#efefef;border-left:1px solid #8c8c8c;border-top:1px solid #9a9a9a;border-bottom:1px solid #707070;border-radius:5px 0 0 0;box-sizing:border-box"></div>
<div class="a" style="left:843px;top:66px;width:259px;height:21px;background:linear-gradient(#fdfdfd 0%,#f3f3f3 44%,#e6e6e6 46%,#ececec 100%);border-radius:4px 0 0 0"></div>
<div class="a" style="left:843px;top:87px;width:260px;height:1px;background:#a3a3a3"></div>
<div class="btn" style="left:849px;top:92px;width:68px;height:24px"></div>
<div class="btn" style="left:929px;top:92px;width:68px;height:24px;border-color:#c8c8c8;background:#f0f0f0"></div>
<div class="t s" style="left:882px;top:99px;">Up</div>
<div class="t s" style="left:954px;top:99px;color:#b4b4b4;">Down</div>
<div class="chk" style="left:1028px;top:97px"></div>
<svg class="a" style="left:1029px;top:97px;overflow:visible" width="16" height="16" viewBox="0 0 16 16"><path d="M2.3 6.3 L5.2 10.6 L10 2.3" stroke="#000" stroke-width="2" fill="none"/></svg>
<div class="t s" style="left:1046px;top:99px;">Args</div>
<svg class="a" style="left:848px;top:68px;overflow:visible" width="16" height="16" viewBox="0 0 16 16"><rect x="1" y="1" width="14" height="14" fill="#b8f0f4"/><rect x="4" y="1.5" width="10" height="1" fill="#777"/><rect x="3" y="4.5" width="11" height="1" fill="#777"/><rect x="4" y="7.5" width="10" height="1" fill="#777"/><path d="M1.3 9.5 C0.8 6.5 1.8 5.2 3.2 5" stroke="#000" stroke-width="1.3" fill="none"/><path d="M13.8 8.5 L15.3 5.2" stroke="#000" stroke-width="1.3" fill="none"/><circle cx="4.2" cy="10.8" r="3" fill="#8c8c8c" stroke="#000" stroke-width="1.5"/><circle cx="11.3" cy="10.8" r="3" fill="#8c8c8c" stroke="#000" stroke-width="1.5"/><path d="M6.8 9.6 Q7.75 8.6 8.7 9.6" stroke="#000" stroke-width="1.3" fill="none"/><circle cx="3.4" cy="10" r="0.9" fill="#e0e0e0"/><circle cx="10.5" cy="10" r="0.9" fill="#e0e0e0"/></svg>
<svg class="a" style="left:866px;top:99px;overflow:visible" width="16" height="16" viewBox="0 0 16 16"><path d="M4 0 L8.5 4.5 H5.5 V12 H2.5 V4.5 H-0.5 Z" fill="#000"/><rect x="8" y="10" width="1.5" height="1.5" fill="#000"/><rect x="10.5" y="10" width="1.5" height="1.5" fill="#000"/></svg>
<svg class="a" style="left:937px;top:99px;overflow:visible" width="16" height="16" viewBox="0 0 16 16"><rect x="0" y="0" width="2" height="1.5" fill="#666"/><rect x="3" y="0" width="2" height="1.5" fill="#666"/><rect x="6" y="0" width="6" height="2" fill="#666"/><rect x="8" y="0" width="3" height="10" fill="#666"/><path d="M5 8 H14 L9.5 12 Z" fill="#666"/></svg>
<div class="a" style="left:843px;top:118px;width:259px;height:123px;background:#fff;border-top:1px solid #b8b8b8;box-sizing:border-box"></div>
<div class="a" style="left:843px;top:244px;width:259px;height:1px;background:#b4b4b4"></div>
<div class="a" style="left:843px;top:245px;width:259px;height:16px;background:linear-gradient(#fbfbfb,#ededed)"></div>
<div class="a" style="left:396px;top:107px;width:652px;height:560px;background:#707070;border-radius:6px 6px 0 0"></div>
<div class="a" style="left:397px;top:131px;width:650px;height:535px;background:#efefef;border-left:1px solid #fff;border-bottom:1px solid #fff;box-sizing:border-box"></div>
<div class="a" style="left:396px;top:107px;width:652px;height:24px;background:linear-gradient(#41a3e3 0%,#3596d6 50%,#2f86c6 55%,#2c7fbf 100%);border:1px solid #1f5f90;border-bottom-color:#174a70;border-radius:6px 6px 0 0;box-sizing:border-box"></div>
<div class="t s" style="left:682px;top:113px;color:#fff;text-shadow:0 1px 0 rgba(0,0,0,0.35);">B::Trace</div>
<div class="a" style="left:984px;top:110px;width:18px;height:18px;box-sizing:border-box;border:1px solid #1d5c8c;border-radius:4px;background:linear-gradient(#3a9ddd,#2c82c4)"></div>
<div class="a" style="left:1004px;top:110px;width:18px;height:18px;box-sizing:border-box;border:1px solid #1d5c8c;border-radius:4px;background:linear-gradient(#3a9ddd,#2c82c4)"></div>
<div class="a" style="left:1024px;top:110px;width:18px;height:18px;box-sizing:border-box;border:1px solid #1d5c8c;border-radius:4px;background:linear-gradient(#3a9ddd,#2c82c4)"></div>
<div class="a" style="left:989px;top:120px;width:9px;height:3px;background:#fff"></div>
<div class="a" style="left:1009px;top:115px;width:9px;height:8px;border:1.5px solid #fff;border-top-width:2px;box-sizing:border-box"></div>
<svg class="a" style="left:1028px;top:114px" width="10" height="10" viewBox="0 0 10 10" shape-rendering="crispEdges"><path d="M1.5 1.5 L8.5 8.5 M8.5 1.5 L1.5 8.5" stroke="#fff" stroke-width="2.2" fill="none"/></svg>
<div class="grp" style="left:402px;top:144px;width:640px;height:74px"></div>
<div class="a" style="left:413px;top:141px;width:61px;height:6px;background:#efefef"></div>
<div class="t s" style="left:417px;top:138px;">METHOD</div>
<div class="rad dis" style="left:412px;top:162px"></div>
<div class="t s" style="left:432px;top:163px;color:#b9b9b9;">Onchip</div>
<div class="rad dis" style="left:492px;top:162px"></div>
<div class="t s" style="left:512px;top:163px;color:#b9b9b9;">Analyzer</div>
<div class="rad on" style="left:572px;top:162px"></div>
<div class="t s" style="left:592px;top:163px;">CAnalyzer</div>
<div class="rad dis" style="left:652px;top:162px"></div>
<div class="t s" style="left:672px;top:163px;color:#b9b9b9;">HAnalyzer</div>
<div class="rad dis" style="left:732px;top:162px"></div>
<div class="t s" style="left:752px;top:163px;color:#b9b9b9;">Integrator</div>
<div class="rad dis" style="left:812px;top:162px"></div>
<div class="t s" style="left:832px;top:163px;color:#b9b9b9;">Probe</div>
<div class="rad dis" style="left:892px;top:162px"></div>
<div class="t s" style="left:912px;top:163px;color:#b9b9b9;">IProbe</div>
<div class="rad" style="left:972px;top:162px"></div>
<div class="t s" style="left:992px;top:163px;">LA</div>
<div class="rad" style="left:652px;top:186px"></div>
<div class="t s" style="left:672px;top:187px;">ART</div>
<div class="rad" style="left:732px;top:186px"></div>
<div class="t s" style="left:752px;top:187px;">LOGGER</div>
<div class="rad" style="left:812px;top:186px"></div>
<div class="t s" style="left:832px;top:187px;">SNOOPer</div>
<div class="rad" style="left:892px;top:186px"></div>
<div class="t s" style="left:912px;top:187px;">FDX</div>
<div class="rad" style="left:972px;top:186px"></div>
<div class="t s" style="left:992px;top:187px;">NONE</div>
<div class="grp" style="left:402px;top:241px;width:120px;height:169px"></div>
<div class="a" style="left:413px;top:238px;width:36px;height:6px;background:#efefef"></div>
<div class="t s" style="left:416px;top:234px;">state</div>
<div class="rad" style="left:412px;top:258px"></div>
<div class="t s" style="left:432px;top:259px;">DISable</div>
<div class="rad on" style="left:412px;top:282px"></div>
<div class="t s" style="left:432px;top:283px;">OFF</div>
<div class="rad" style="left:412px;top:306px"></div>
<div class="t s" style="left:432px;top:307px;">Arm</div>
<div class="rad" style="left:412px;top:330px"></div>
<div class="t s" style="left:432px;top:331px;">trigger</div>
<div class="rad" style="left:412px;top:354px"></div>
<div class="t s" style="left:432px;top:355px;">break</div>
<div class="rad dis" style="left:412px;top:378px"></div>
<div class="t s" style="left:432px;top:379px;color:#b9b9b9;">SPY</div>
<div class="grp" style="left:532px;top:241px;width:120px;height:121px"></div>
<div class="a" style="left:543px;top:238px;width:32px;height:6px;background:#efefef"></div>
<div class="t s" style="left:547px;top:234px;">used</div>
<div class="a" style="left:542px;top:253px;width:100px;height:23px;border:1px solid #c6c6c6;box-sizing:border-box"></div>
<div class="t s" style="left:544px;top:283px;">0.</div>
<div class="a" style="left:534px;top:312px;width:117px;height:1px;background:#bcbcbc"></div>
<div class="a" style="left:543px;top:309px;width:34px;height:6px;background:#efefef"></div>
<div class="t s" style="left:547px;top:306px;">SIZE</div>
<div class="inp" style="left:542px;top:326px;width:100px;height:22px"></div>
<div class="t s" style="left:545px;top:331px;">134217728.</div>
<div class="grp" style="left:532px;top:385px;width:120px;height:169px"></div>
<div class="a" style="left:543px;top:382px;width:38px;height:6px;background:#efefef"></div>
<div class="t s" style="left:547px;top:378px;">Mode</div>
<div class="rad on" style="left:542px;top:402px"></div>
<div class="t s" style="left:562px;top:403px;">Fifo</div>
<div class="rad" style="left:542px;top:426px"></div>
<div class="t s" style="left:562px;top:427px;">Stack</div>
<div class="rad" style="left:542px;top:450px"></div>
<div class="t s" style="left:562px;top:451px;">Leash</div>
<div class="rad" style="left:542px;top:474px"></div>
<div class="t s" style="left:562px;top:475px;">STREAM</div>
<div class="rad" style="left:542px;top:498px"></div>
<div class="t s" style="left:562px;top:499px;">PIPE</div>
<div class="rad dis" style="left:542px;top:522px"></div>
<div class="t s" style="left:562px;top:523px;color:#b9b9b9;">RTS</div>
<div class="grp" style="left:402px;top:433px;width:120px;height:145px"></div>
<div class="a" style="left:413px;top:430px;width:72px;height:6px;background:#efefef"></div>
<div class="t s" style="left:417px;top:426px;">commands</div>
<div class="btn" style="left:412px;top:446px;width:100px;height:23px"></div>
<div class="btn" style="left:412px;top:470px;width:100px;height:23px"></div>
<div class="btn" style="left:412px;top:494px;width:100px;height:23px"></div>
<div class="t s" style="left:459px;top:451px;">Init</div>
<div class="t s" style="left:442px;top:475px;">SnapShot</div>
<div class="t s" style="left:458px;top:499px;">List</div>
<svg class="a" style="left:444px;top:451px;overflow:visible" width="16" height="16" viewBox="0 0 16 16"><circle cx="6" cy="6" r="5.3" fill="none" stroke="#000" stroke-width="1.5"/><path d="M3.3 3.3 L8.7 8.7 M8.7 3.3 L3.3 8.7" stroke="#000" stroke-width="1.4"/></svg>
<svg class="a" style="left:425px;top:475px;overflow:visible" width="16" height="16" viewBox="0 0 16 16"><circle cx="6.5" cy="6.5" r="6.3" fill="#000"/><path d="M4 4 L9 9 M9 4 L4 9" stroke="#fff" stroke-width="1.5"/></svg>
<svg class="a" style="left:442px;top:499px;overflow:visible" width="16" height="16" viewBox="0 0 16 16"><rect x="0" y="0" width="13" height="13" fill="#ffff88"/><rect x="0.5" y="1" width="1" height="1" fill="#000"/><rect x="11.5" y="1" width="1" height="1" fill="#000"/><rect x="3" y="1" width="1" height="1" fill="#8a8a40"/><rect x="5" y="1" width="1" height="1" fill="#8a8a40"/><rect x="7" y="1" width="1" height="1" fill="#8a8a40"/><rect x="9" y="1" width="1" height="1" fill="#8a8a40"/><rect x="0.5" y="3" width="1" height="1" fill="#000"/><rect x="11.5" y="3" width="1" height="1" fill="#000"/><rect x="3" y="3" width="1" height="1" fill="#8a8a40"/><rect x="5" y="3" width="1" height="1" fill="#8a8a40"/><rect x="7" y="3" width="1" height="1" fill="#8a8a40"/><rect x="9" y="3" width="1" height="1" fill="#8a8a40"/><rect x="0.5" y="5" width="1" height="1" fill="#000"/><rect x="11.5" y="5" width="1" height="1" fill="#000"/><rect x="3" y="5" width="1" height="1" fill="#8a8a40"/><rect x="5" y="5" width="1" height="1" fill="#8a8a40"/><rect x="7" y="5" width="1" height="1" fill="#8a8a40"/><rect x="9" y="5" width="1" height="1" fill="#8a8a40"/><rect x="0.5" y="7" width="1" height="1" fill="#000"/><rect x="11.5" y="7" width="1" height="1" fill="#000"/><rect x="3" y="7" width="1" height="1" fill="#8a8a40"/><rect x="5" y="7" width="1" height="1" fill="#8a8a40"/><rect x="7" y="7" width="1" height="1" fill="#8a8a40"/><rect x="9" y="7" width="1" height="1" fill="#8a8a40"/><rect x="0.5" y="9" width="1" height="1" fill="#000"/><rect x="11.5" y="9" width="1" height="1" fill="#000"/><rect x="3" y="9" width="1" height="1" fill="#8a8a40"/><rect x="5" y="9" width="1" height="1" fill="#8a8a40"/><rect x="7" y="9" width="1" height="1" fill="#8a8a40"/><rect x="9" y="9" width="1" height="1" fill="#8a8a40"/><rect x="0.5" y="11" width="1" height="1" fill="#000"/><rect x="11.5" y="11" width="1" height="1" fill="#000"/><rect x="3" y="11" width="1" height="1" fill="#8a8a40"/><rect x="5" y="11" width="1" height="1" fill="#8a8a40"/><rect x="7" y="11" width="1" height="1" fill="#8a8a40"/><rect x="9" y="11" width="1" height="1" fill="#8a8a40"/></svg>
<div class="chk" style="left:412px;top:522px"></div>
<svg class="a" style="left:413px;top:523px;overflow:visible" width="16" height="16" viewBox="0 0 16 16"><path d="M2.3 6.3 L5.2 10.6 L10 2.3" stroke="#000" stroke-width="2" fill="none"/></svg>
<div class="t s" style="left:431px;top:523px;">AutoArm</div>
<div class="chk" style="left:412px;top:546px"></div>
<svg class="a" style="left:413px;top:547px;overflow:visible" width="16" height="16" viewBox="0 0 16 16"><path d="M2.3 6.3 L5.2 10.6 L10 2.3" stroke="#000" stroke-width="2" fill="none"/></svg>
<div class="t s" style="left:431px;top:547px;">AutoInit</div>
<div class="grp" style="left:662px;top:241px;width:120px;height:49px"></div>
<div class="a" style="left:673px;top:238px;width:50px;height:6px;background:#efefef"></div>
<div class="t s" style="left:677px;top:234px;">ACCESS</div>
<div class="btn" style="left:672px;top:253px;width:100px;height:23px"></div>
<div class="t s" style="left:680px;top:259px;">auto</div>
<svg class="a" style="left:755px;top:262px" width="9" height="5" viewBox="0 0 9 5" shape-rendering="crispEdges"><path d="M0 0 H9 L4.5 5 Z" fill="#555"/></svg>
<div class="grp" style="left:662px;top:313px;width:120px;height:49px"></div>
<div class="a" style="left:673px;top:310px;width:50px;height:6px;background:#efefef"></div>
<div class="t s" style="left:677px;top:306px;">CLOCK</div>
<div class="inp" style="left:672px;top:326px;width:100px;height:22px"></div>
<div class="grp" style="left:662px;top:385px;width:120px;height:241px"></div>
<div class="a" style="left:673px;top:382px;width:80px;height:6px;background:#efefef"></div>
<div class="t s" style="left:677px;top:378px;">TraceCLOCK</div>
<div class="inp" style="left:672px;top:398px;width:100px;height:22px"></div>
<div class="a" style="left:668px;top:401px;width:91px;height:16px;background:#9ef59e;border-radius:8px;filter:blur(2px)"></div>
<div class="inp" style="left:672px;top:398px;width:100px;height:22px;background:transparent"></div>
<div class="t s" style="left:674px;top:403px;">239.9MHz</div>
<div class="a" style="left:663px;top:432px;width:118px;height:1px;background:#bcbcbc"></div>
<div class="a" style="left:673px;top:429px;width:70px;height:6px;background:#efefef"></div>
<div class="t s" style="left:677px;top:426px;">THreshold</div>
<div class="inp" style="left:672px;top:446px;width:100px;height:23px"></div>
<div class="a" style="left:751px;top:447px;width:1px;height:21px;background:#c4c4c4"></div>
<div class="a" style="left:752px;top:447px;width:19px;height:21px;background:linear-gradient(#f8f8f8,#e8e8e8)"></div>
<div class="t s" style="left:678px;top:451px;">0.80</div>
<svg class="a" style="left:756px;top:456px" width="9" height="5" viewBox="0 0 9 5" shape-rendering="crispEdges"><path d="M0 0 H9 L4.5 5 Z" fill="#555"/></svg>
<div class="a" style="left:663px;top:480px;width:118px;height:1px;background:#bcbcbc"></div>
<div class="a" style="left:673px;top:477px;width:84px;height:6px;background:#efefef"></div>
<div class="t s" style="left:677px;top:474px;">TERMination</div>
<div class="btn" style="left:672px;top:494px;width:100px;height:23px"></div>
<div class="t s" style="left:680px;top:499px;">ON</div>
<svg class="a" style="left:755px;top:503px" width="9" height="5" viewBox="0 0 9 5" shape-rendering="crispEdges"><path d="M0 0 H9 L4.5 5 Z" fill="#555"/></svg>
<div class="a" style="left:663px;top:528px;width:118px;height:1px;background:#bcbcbc"></div>
<div class="btn" style="left:672px;top:542px;width:100px;height:23px"></div>
<div class="btn" style="left:672px;top:566px;width:100px;height:23px"></div>
<div class="btn" style="left:672px;top:590px;width:100px;height:23px"></div>
<div class="t s" style="left:694px;top:547px;">TestFocus</div>
<div class="t s" style="left:700px;top:571px;">AutoFocus</div>
<div class="t s" style="left:698px;top:595px;">ShowFocus</div>
<svg class="a" style="left:683px;top:570px;overflow:visible" width="16" height="16" viewBox="0 0 16 16"><rect width="15" height="14" fill="#ffff88"/><path d="M0.5 2.5 L7.5 11.5 M0.5 11.5 L7.5 2.5 M7.5 2.5 L14.5 11.5 M7.5 11.5 L14.5 2.5" stroke="#000" stroke-width="1.2" fill="none"/><path d="M0 7 H15 M7.5 0.5 V13.5" stroke="#0010ff" stroke-width="0.9"/></svg>
<svg class="a" style="left:681px;top:594px" width="14" height="14" viewBox="0 0 14 14" shape-rendering="crispEdges"><rect width="14" height="14" fill="#ffff88"/><path d="M0 2.5 C4 2.5 3 11.5 7 11.5 C11 11.5 10 2.5 14 2.5 M0 11.5 C4 11.5 3 2.5 7 2.5 C11 2.5 10 11.5 14 11.5" stroke="#000" stroke-width="1.7" fill="none"/></svg>
<div class="grp" style="left:792px;top:241px;width:120px;height:73px"></div>
<div class="a" style="left:803px;top:238px;width:48px;height:6px;background:#efefef"></div>
<div class="t s" style="left:807px;top:234px;">TDelay</div>
<div class="inp" style="left:802px;top:254px;width:100px;height:22px"></div>
<div class="t s" style="left:805px;top:259px;">0.</div>
<div class="inp" style="left:802px;top:278px;width:100px;height:23px"></div>
<div class="a" style="left:881px;top:279px;width:1px;height:21px;background:#c4c4c4"></div>
<div class="a" style="left:882px;top:279px;width:19px;height:21px;background:linear-gradient(#f8f8f8,#e8e8e8)"></div>
<div class="t s" style="left:806px;top:283px;">0%</div>
<svg class="a" style="left:886px;top:288px" width="9" height="5" viewBox="0 0 9 5" shape-rendering="crispEdges"><path d="M0 0 H9 L4.5 5 Z" fill="#555"/></svg>
<div class="grp" style="left:792px;top:337px;width:120px;height:49px"></div>
<div class="a" style="left:803px;top:334px;width:56px;height:6px;background:#efefef"></div>
<div class="t s" style="left:807px;top:330px;">TSELect</div>
<div class="chk" style="left:802px;top:354px"></div>
<div class="t s" style="left:821px;top:355px;">BusA</div>
<div class="grp" style="left:792px;top:409px;width:120px;height:49px"></div>
<div class="a" style="left:803px;top:406px;width:40px;height:6px;background:#efefef"></div>
<div class="t s" style="left:807px;top:402px;">TOut</div>
<div class="chk" style="left:802px;top:426px"></div>
<div class="t s" style="left:821px;top:427px;">BusA</div>
<div class="grp" style="left:922px;top:241px;width:120px;height:169px"></div>
<div class="btn" style="left:932px;top:253px;width:100px;height:23px;"></div>
<div class="t s" style="left:964px;top:259px;">TrOnchip</div>
<div class="btn" style="left:932px;top:277px;width:100px;height:23px;border-color:#c4c4c4;background:linear-gradient(#f8f8f8,#ececec);"></div>
<div class="t s" style="left:956px;top:283px;color:#b9b9b9;letter-spacing:-0.6px;">TRACEPORT</div>
<div class="btn" style="left:932px;top:301px;width:100px;height:23px;"></div>
<div class="t s" style="left:976px;top:307px;">TPIU</div>
<div class="btn" style="left:932px;top:325px;width:100px;height:23px;"></div>
<div class="t s" style="left:977px;top:331px;">ETM</div>
<div class="btn" style="left:932px;top:349px;width:100px;height:23px;"></div>
<div class="t s" style="left:979px;top:355px;">ITM</div>
<div class="btn" style="left:932px;top:373px;width:100px;height:23px;"></div>
<div class="t s" style="left:976px;top:379px;">BMC</div>
<svg class="a" style="left:946px;top:259px" width="17" height="14" viewBox="0 0 17 14" shape-rendering="crispEdges"><path d="M1 6 L6 3 L6 11 Z" fill="#222"/><path d="M9 5 H16 M9 7.5 H16 M9 10 H15" stroke="#333" stroke-width="1.2" stroke-dasharray="1.2 1"/><rect x="2" y="0" width="12.5" height="2.5" fill="#f00000"/><rect x="6.7" y="0" width="3" height="13" fill="#f00000"/></svg>
<svg class="a" style="left:937px;top:282px" width="16" height="16" viewBox="0 0 16 16"><line x1="3" y1="13" x2="9" y2="7" stroke="#a0a0a0" stroke-width="6.2" stroke-linecap="round"/><circle cx="11" cy="5" r="5" fill="#a0a0a0"/><line x1="3" y1="13" x2="9" y2="7" stroke="#e4e4e4" stroke-width="3.6" stroke-linecap="round"/><circle cx="11" cy="5" r="3.6" fill="#e4e4e4"/><line x1="10.2" y1="5.8" x2="14.8" y2="1.2" stroke="#a0a0a0" stroke-width="4.2"/><line x1="11" y1="5" x2="16" y2="0" stroke="#f2f2f2" stroke-width="2"/><line x1="3.5" y1="14" x2="9.5" y2="8" stroke="rgba(0,0,0,0.35)" stroke-width="1"/></svg>
<svg class="a" style="left:958px;top:305px" width="16" height="16" viewBox="0 0 16 16"><line x1="3" y1="13" x2="9" y2="7" stroke="#000" stroke-width="6.2" stroke-linecap="round"/><circle cx="11" cy="5" r="5" fill="#000"/><line x1="3" y1="13" x2="9" y2="7" stroke="#e8e890" stroke-width="3.6" stroke-linecap="round"/><circle cx="11" cy="5" r="3.6" fill="#e8e890"/><line x1="10.2" y1="5.8" x2="14.8" y2="1.2" stroke="#000" stroke-width="4.2"/><line x1="11" y1="5" x2="16" y2="0" stroke="#f4f4f4" stroke-width="2"/><line x1="3.5" y1="14" x2="9.5" y2="8" stroke="rgba(0,0,0,0.35)" stroke-width="1"/></svg>
<svg class="a" style="left:959px;top:329px" width="16" height="16" viewBox="0 0 16 16"><line x1="3" y1="13" x2="9" y2="7" stroke="#000" stroke-width="6.2" stroke-linecap="round"/><circle cx="11" cy="5" r="5" fill="#000"/><line x1="3" y1="13" x2="9" y2="7" stroke="#e8e890" stroke-width="3.6" stroke-linecap="round"/><circle cx="11" cy="5" r="3.6" fill="#e8e890"/><line x1="10.2" y1="5.8" x2="14.8" y2="1.2" stroke="#000" stroke-width="4.2"/><line x1="11" y1="5" x2="16" y2="0" stroke="#f4f4f4" stroke-width="2"/><line x1="3.5" y1="14" x2="9.5" y2="8" stroke="rgba(0,0,0,0.35)" stroke-width="1"/></svg>
<svg class="a" style="left:961px;top:353px" width="16" height="16" viewBox="0 0 16 16"><line x1="3" y1="13" x2="9" y2="7" stroke="#000" stroke-width="6.2" stroke-linecap="round"/><circle cx="11" cy="5" r="5" fill="#000"/><line x1="3" y1="13" x2="9" y2="7" stroke="#e8e890" stroke-width="3.6" stroke-linecap="round"/><circle cx="11" cy="5" r="3.6" fill="#e8e890"/><line x1="10.2" y1="5.8" x2="14.8" y2="1.2" stroke="#000" stroke-width="4.2"/><line x1="11" y1="5" x2="16" y2="0" stroke="#f4f4f4" stroke-width="2"/><line x1="3.5" y1="14" x2="9.5" y2="8" stroke="rgba(0,0,0,0.35)" stroke-width="1"/></svg>
<svg class="a" style="left:960px;top:379px" width="14" height="14" viewBox="0 0 14 14" shape-rendering="crispEdges"><circle cx="6.8" cy="6.5" r="5.8" fill="#ffff00" stroke="#000" stroke-width="1.4"/><path d="M4 4.5 L7.5 11" stroke="#000" stroke-width="1.3" stroke-dasharray="1.3 0.9"/><path d="M5.5 2.8 L6 4.5 M8 2.5 L8 4.5 M10 3.2 L9.5 5" stroke="#000" stroke-width="1.1"/></svg>
<svg class="a" style="left:402px;top:110px" width="16" height="16" viewBox="0 0 16 16"><line x1="3" y1="13" x2="9" y2="7" stroke="#000" stroke-width="6.2" stroke-linecap="round"/><circle cx="11" cy="5" r="5" fill="#000"/><line x1="3" y1="13" x2="9" y2="7" stroke="#ffff20" stroke-width="3.6" stroke-linecap="round"/><circle cx="11" cy="5" r="3.6" fill="#ffff20"/><line x1="10.2" y1="5.8" x2="14.8" y2="1.2" stroke="#000" stroke-width="4.2"/><line x1="11" y1="5" x2="16" y2="0" stroke="#3a9bdc" stroke-width="2"/><line x1="3.5" y1="14" x2="9.5" y2="8" stroke="rgba(0,0,0,0.35)" stroke-width="1"/></svg>
<div class="a" style="left:1px;top:708px;width:1101px;height:1px;background:#9a9a9a"></div>
<div class="a" style="left:1px;top:709px;width:1101px;height:1px;background:#ffffff"></div>
<div class="a" style="left:714px;top:712px;width:2px;height:2px;background:#a8a8a8;border-radius:1px"></div>
<div class="a" style="left:717px;top:712px;width:2px;height:2px;background:#a8a8a8;border-radius:1px"></div>
<div class="a" style="left:720px;top:712px;width:2px;height:2px;background:#a8a8a8;border-radius:1px"></div>
<div class="a" style="left:723px;top:712px;width:2px;height:2px;background:#a8a8a8;border-radius:1px"></div>
<div class="a" style="left:726px;top:712px;width:2px;height:2px;background:#a8a8a8;border-radius:1px"></div>
<div class="a" style="left:729px;top:712px;width:2px;height:2px;background:#a8a8a8;border-radius:1px"></div>
<div class="t m" style="left:25px;top:724px;transform:scaleY(1.2);transform-origin:0 10px;-webkit-text-stroke:0.3px #000;">B::</div>
<div class="a" style="left:46px;top:718px;width:1056px;height:23px;background:#fff;border:1px solid #a8a8a8;border-right:none;border-radius:3px 0 0 3px;box-sizing:border-box"></div>
<div class="a" style="left:27px;top:741px;width:1075px;height:15px;background:#c9c9c9"></div>
<div class="a" style="left:214px;top:738px;width:90px;height:20px;background:#90e090;opacity:0.75;border-radius:9px;filter:blur(3px)"></div>
<div class="t m" style="left:27px;top:743px;color:#111;transform:scaleY(1.15);transform-origin:0 10px;">Analyzer data capture o.k. (f=119.9MHz,testpattern)</div>
<div class="btn" style="left:27px;top:758px;width:92px;height:26px;background:linear-gradient(#fbfbfb,#e7e7e7)"></div>
<div class="t s" style="left:27px;top:765px;width:92px;text-align:center;font-weight:bold;color:#1d4fd6;">components</div>
<div class="btn" style="left:121px;top:758px;width:92px;height:26px;background:linear-gradient(#fbfbfb,#e7e7e7)"></div>
<div class="t s" style="left:121px;top:765px;width:92px;text-align:center;font-weight:bold;color:#1d4fd6;">trace</div>
<div class="btn" style="left:215px;top:758px;width:92px;height:26px;background:linear-gradient(#fbfbfb,#e7e7e7)"></div>
<div class="t s" style="left:215px;top:765px;width:92px;text-align:center;">Data</div>
<div class="btn" style="left:309px;top:758px;width:92px;height:26px;background:linear-gradient(#fbfbfb,#e7e7e7)"></div>
<div class="t s" style="left:309px;top:765px;width:92px;text-align:center;">Var</div>
<div class="btn" style="left:403px;top:758px;width:92px;height:26px;background:linear-gradient(#fbfbfb,#e7e7e7)"></div>
<div class="t s" style="left:403px;top:765px;width:92px;text-align:center;">List</div>
<div class="btn" style="left:497px;top:758px;width:92px;height:26px;background:linear-gradient(#fbfbfb,#e7e7e7)"></div>
<div class="t s" style="left:497px;top:765px;width:92px;text-align:center;">PERF</div>
<div class="btn" style="left:591px;top:758px;width:92px;height:26px;background:linear-gradient(#fbfbfb,#e7e7e7)"></div>
<div class="t s" style="left:591px;top:765px;width:92px;text-align:center;">SYStem</div>
<div class="btn" style="left:685px;top:758px;width:92px;height:26px;background:linear-gradient(#fbfbfb,#e7e7e7)"></div>
<div class="t s" style="left:685px;top:765px;width:92px;text-align:center;">Step</div>
<div class="btn" style="left:779px;top:758px;width:92px;height:26px;background:linear-gradient(#fbfbfb,#e7e7e7)"></div>
<div class="t s" style="left:779px;top:765px;width:92px;text-align:center;">Go</div>
<div class="btn" style="left:873px;top:758px;width:92px;height:26px;background:linear-gradient(#fbfbfb,#e7e7e7)"></div>
<div class="t s" style="left:873px;top:765px;width:92px;text-align:center;">Break</div>
<div class="btn" style="left:967px;top:758px;width:92px;height:26px;background:linear-gradient(#fbfbfb,#e7e7e7)"></div>
<div class="t s" style="left:967px;top:765px;width:92px;text-align:center;">sYmbol</div>
<div class="btn" style="left:1061px;top:758px;width:92px;height:26px;background:linear-gradient(#fbfbfb,#e7e7e7)"></div>
<div class="t s" style="left:1061px;top:765px;width:92px;text-align:center;">Frame</div>
<div class="a" style="left:3px;top:791px;width:818px;height:19px;border-top:1px solid #a8a8a8;border-left:1px solid #a8a8a8;border-right:1px solid #fff;border-bottom:1px solid #fff;box-sizing:border-box"></div>
<div class="a" style="left:821px;top:791px;width:238px;height:19px;border-top:1px solid #a8a8a8;border-left:1px solid #a8a8a8;border-right:1px solid #fff;border-bottom:1px solid #fff;box-sizing:border-box"></div>
<div class="a" style="left:1060px;top:791px;width:42px;height:19px;border-top:1px solid #a8a8a8;border-left:1px solid #a8a8a8;border-bottom:1px solid #fff;box-sizing:border-box"></div>
<div class="a" style="left:0px;top:811px;width:1102px;height:1px;background:#c4c4c4"></div>
<div class="a" style="left:0px;top:812px;width:1102px;height:1px;background:#9a9a9a"></div>
<div class="t s" style="left:825px;top:794px;">(unknown)</div>
<div class="t s" style="left:1064px;top:794px;">stopped</div>
</body></html>
